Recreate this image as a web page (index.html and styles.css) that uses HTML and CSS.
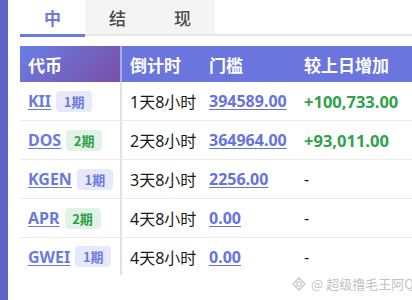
FILE: index.html
```html
<!DOCTYPE html>
<html lang="zh">
<head>
<meta charset="utf-8">
<link rel="stylesheet" href="styles.css">
</head>
<body>
<div class="panel">
  <div class="tabs">
    <div class="tab active">中</div>
    <div class="tab">结</div>
    <div class="tab">现</div>
  </div>
  <div class="table">
    <div class="row head">
      <div class="cell first">代币</div>
      <div class="cell">倒计时</div>
      <div class="cell">门槛</div>
      <div class="cell">较上日增加</div>
    </div>
    <div class="row">
      <div class="cell first"><a class="sym">KII</a><span class="badge b1">1期</span></div>
      <div class="cell">1天8小时</div>
      <div class="cell"><a class="num">394589.00</a></div>
      <div class="cell up">+100,733.00</div>
    </div>
    <div class="row">
      <div class="cell first"><a class="sym">DOS</a><span class="badge b2">2期</span></div>
      <div class="cell">2天8小时</div>
      <div class="cell"><a class="num">364964.00</a></div>
      <div class="cell up">+93,011.00</div>
    </div>
    <div class="row">
      <div class="cell first"><a class="sym">KGEN</a><span class="badge b1">1期</span></div>
      <div class="cell">3天8小时</div>
      <div class="cell"><a class="num">2256.00</a></div>
      <div class="cell">-</div>
    </div>
    <div class="row">
      <div class="cell first"><a class="sym">APR</a><span class="badge b2">2期</span></div>
      <div class="cell">4天8小时</div>
      <div class="cell"><a class="num">0.00</a></div>
      <div class="cell">-</div>
    </div>
    <div class="row last">
      <div class="cell first"><a class="sym">GWEI</a><span class="badge b1">1期</span></div>
      <div class="cell">4天8小时</div>
      <div class="cell"><a class="num">0.00</a></div>
      <div class="cell">-</div>
    </div>
  </div>
  <div class="watermark">
    <svg width="14" height="14" viewBox="0 0 14 14"><path d="M7 1 L13 7 L7 13 L1 7 Z" fill="none" stroke="#c4c4c4" stroke-width="1.3"/><circle cx="7" cy="7" r="2.2" fill="none" stroke="#c4c4c4" stroke-width="1.2"/></svg>
    <span>@ 超级撸毛王阿Q</span>
  </div>
</div>
</body>
</html>
```
FILE: styles.css
```css
* { box-sizing: border-box; }
html, body { margin: 0; padding: 0; }
body {
  width: 412px;
  height: 300px;
  overflow: hidden;
  background: #5c64c6;
  font-family: "Noto Sans", "Noto Sans CJK SC", sans-serif;
}
.panel {
  position: relative;
  margin-left: 8px;
  height: 300px;
  background: #fff;
  padding: 0 0 0 12px;
  overflow: hidden;
}
.tabs {
  display: flex;
  height: 36px;
  border-bottom: 2px solid #e6e6e6;
  margin-right: -20px;
}
.tab {
  width: 65px;
  height: 34px;
  display: flex;
  align-items: center;
  justify-content: center;
  background: #f4f4f4;
  color: #4a4a4a;
  font-family: "Noto Sans CJK SC", sans-serif;
  font-size: 17px;
  font-weight: 500;
}
.tab.active {
  background: #fff;
  color: #6a7be0;
  font-weight: 700;
  height: 37px;
  border-bottom: 3px solid #6a7be0;
}
.table {
  margin-top: 10px;
  width: 460px;
}
.row {
  display: grid;
  grid-template-columns: 102px 79px 95px 184px;
  height: 39px;
  border-bottom: 1px solid #ebebeb;
  align-items: stretch;
}
.row.last { border-bottom: none; height: 37px; }
.row.head {
  height: 36px;
  background: #6a76dd;
  border-bottom: none;
}
.cell {
  display: flex;
  align-items: center;
  padding: 0 8px;
  font-size: 16px;
  color: #1a1a1a;
  white-space: nowrap;
}
.cell.first {
  border-right: 2px solid #e2e2e2;
  padding-right: 0;
}
.head .cell {
  color: #fff;
  font-family: "Noto Sans CJK SC", sans-serif;
  font-weight: 700;
  font-size: 17px;
}
.head .cell.first {
  background: linear-gradient(135deg, #6a7ee6 0%, #7a4ea6 100%);
  border-right: 2px solid #a6abea;
}
.sym {
  color: #6a7be0;
  font-weight: 700;
  font-size: 16px;
  text-decoration: underline;
  text-underline-offset: 2px;
}
.num {
  color: #6673dc;
  font-weight: 700;
  font-size: 16px;
  text-decoration: underline;
  text-underline-offset: 2px;
}
.up {
  color: #2ea24a;
  font-weight: 700;
  font-size: 16.5px;
}
.badge {
  margin-left: 5px;
  width: 36px;
  height: 21px;
  border-radius: 4px;
  display: inline-flex;
  align-items: center;
  justify-content: center;
  font-family: "Noto Sans CJK SC", sans-serif;
  font-size: 13px;
  font-weight: 700;
}
.b1 { background: #e7e9fb; color: #6a7be0; }
.b2 { background: #e0f3e4; color: #2e9e48; }
.watermark {
  position: absolute;
  left: 284px;
  top: 274px;
  display: flex;
  align-items: center;
  gap: 5px;
  color: #c2c2c2;
  font-family: "Noto Sans CJK SC", sans-serif;
  font-size: 13px;
  white-space: nowrap;
}
```
